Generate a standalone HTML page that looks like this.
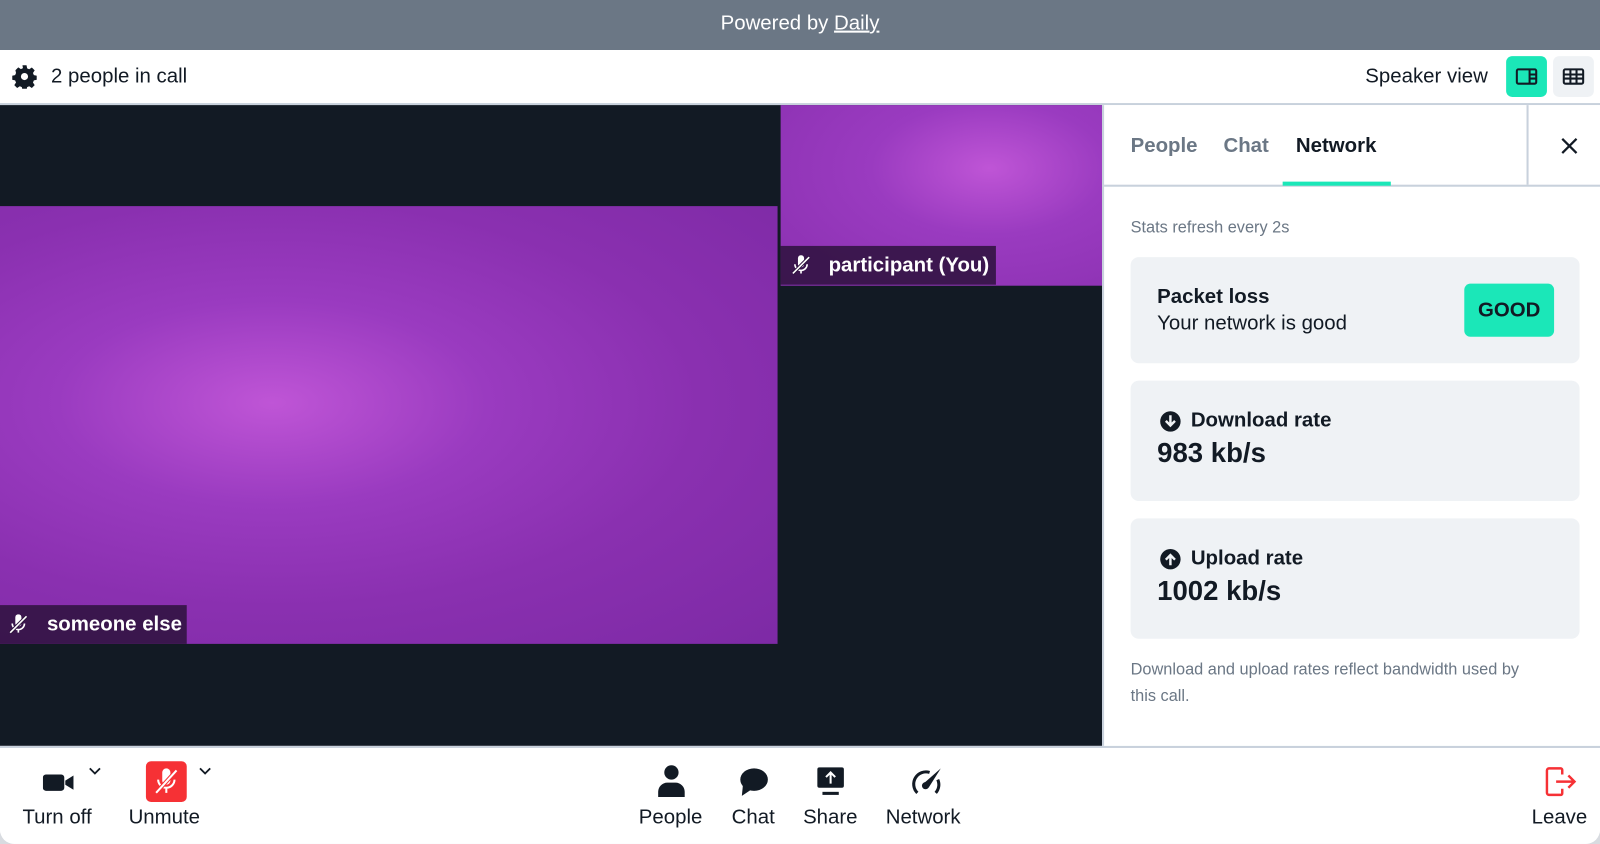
<!DOCTYPE html>
<html><head><meta charset="utf-8"><style>
*{box-sizing:border-box;margin:0;padding:0}
body{width:1600px;height:844px;overflow:hidden;background:#d8dbe0;font-family:"Liberation Sans",sans-serif;color:#121a24;position:relative}
.abs{position:absolute}
#app{position:absolute;left:0;top:0;width:1568px;height:827px;background:#fff;border-radius:0 0 14px 14px;overflow:hidden;transform:scale(1.02041);transform-origin:0 0}
.top{left:0;top:0;width:1568px;height:49px;background:#6b7785;color:#fff;font-size:20px;text-align:center;line-height:47px}
.top u{text-decoration:underline}
.hdr{left:0;top:49px;width:1568px;height:54px;background:#fff;border-bottom:2px solid #c8d1dc}
.vid{left:0;top:103px;width:1080px;height:628px;background:#121a24}
.purple{background:radial-gradient(ellipse at 35% 45%,#bf55d6 0%,#9a3bc0 30%,#8a30b0 60%,#7d2aa5 100%)}
.tag{background:rgba(45,18,60,.85);color:#fff;font-weight:bold;font-size:20px;height:38px;line-height:38px}
.side{left:1080px;top:103px;width:488px;height:628px;background:#fff;border-left:2px solid #c8d1dc}
.card{background:#eff2f5;border-radius:8px;position:absolute;left:1108px;width:440px}
.bot{left:0;top:731px;width:1568px;height:96px;background:#fff;border-top:2px solid #c8d1dc}
.lbl{position:absolute;font-size:20px;color:#121a24;text-align:center}
</style></head><body>
<div id="app">
<div class="abs top">Powered by <u>Daily</u></div>
<div class="abs hdr">
 <svg class="abs" style="left:12px;top:14px" width="24" height="24" viewBox="0 0 24 24"><path fill="#121a24" d="M10 1h4l.6 3 2 .9 2.6-1.7 2.8 2.8-1.7 2.6.9 2 3 .6v4l-3 .6-.9 2 1.7 2.6-2.8 2.8-2.6-1.7-2 .9-.6 3h-4l-.6-3-2-.9-2.6 1.7-2.8-2.8 1.7-2.6-.9-2-3-.6v-4l3-.6.9-2L3.1 5.8 5.9 3l2.6 1.7 2-.9z"/><circle cx="12" cy="12" r="3.5" fill="#fff"/></svg>
 <div class="abs" style="left:50px;top:15px;font-size:20px">2 people in call</div>
 <div class="abs" style="left:1338px;top:15px;font-size:20px">Speaker view</div>
 <div class="abs" style="left:1476px;top:6px;width:40px;height:40px;background:#1be7b8;border-radius:6px"><svg style="margin:9px" width="22" height="22" viewBox="0 0 22 22"><rect x="1.5" y="4" width="19" height="14" rx="1.5" fill="none" stroke="#121a24" stroke-width="2"/><path d="M14 4v14M14 9h6M14 13h6" stroke="#121a24" stroke-width="2"/></svg></div>
 <div class="abs" style="left:1522px;top:6px;width:40px;height:40px;background:#eff2f5;border-radius:6px"><svg style="margin:9px" width="22" height="22" viewBox="0 0 22 22"><rect x="1.5" y="4" width="19" height="14" rx="1.5" fill="none" stroke="#121a24" stroke-width="2"/><path d="M1.5 9h19M1.5 13h19M8 4v14M14 4v14" stroke="#121a24" stroke-width="2"/></svg></div>
</div>
<div class="abs vid">
 <div class="abs purple" style="left:0;top:99px;width:762px;height:429px"></div>
 <div class="abs tag" style="left:0;top:490px;width:183px"><svg class="abs" style="left:8px;top:9px" width="20" height="20" viewBox="0 0 20 20"><path d="M7 3a3 3 0 016 0v6a3 3 0 01-6 0z" fill="#fff"/><path d="M4 9a6 6 0 0012 0M10 15v3" stroke="#fff" stroke-width="1.6" fill="none"/><path d="M2 18L18 2" stroke="#2d123c" stroke-width="3.5"/><path d="M2 18L18 2" stroke="#fff" stroke-width="1.6"/></svg><span style="margin-left:46px">someone else</span></div>
 <div class="abs purple" style="left:765px;top:0;width:315px;height:177px;background:radial-gradient(ellipse at 65% 35%,#bf55d6 0%,#9a3bc0 40%,#8a30b0 100%)"></div>
 <div class="abs tag" style="left:765px;top:138px;width:211px"><svg class="abs" style="left:10px;top:9px" width="20" height="20" viewBox="0 0 20 20"><path d="M7 3a3 3 0 016 0v6a3 3 0 01-6 0z" fill="#fff"/><path d="M4 9a6 6 0 0012 0M10 15v3" stroke="#fff" stroke-width="1.6" fill="none"/><path d="M2 18L18 2" stroke="#2d123c" stroke-width="3.5"/><path d="M2 18L18 2" stroke="#fff" stroke-width="1.6"/></svg><span style="margin-left:47px">participant (You)</span></div>
</div>
<div class="abs side">
 <div class="abs" style="left:0;top:78px;width:488px;height:2px;background:#c8d1dc"></div>
 <div class="abs" style="left:414px;top:0;width:2px;height:78px;background:#c8d1dc"></div>
 <div class="abs" style="left:26px;top:29px;font-size:20px;color:#6b7785;font-weight:bold">People</div>
 <div class="abs" style="left:117px;top:29px;font-size:20px;color:#6b7785;font-weight:bold">Chat</div>
 <div class="abs" style="left:188px;top:29px;font-size:20px;font-weight:bold">Network</div>
 <div class="abs" style="left:175px;top:75px;width:106px;height:4px;background:#1be7b8"></div>
 <svg class="abs" style="left:447px;top:31px" width="18" height="18" viewBox="0 0 18 18"><path d="M2 2l14 14M16 2L2 16" stroke="#121a24" stroke-width="2.2"/></svg>
 <div class="abs" style="left:26px;top:112px;font-size:16px;color:#6b7785">Stats refresh every 2s</div>
 <div class="abs" style="left:26px;top:541px;width:400px;font-size:16px;line-height:26px;color:#6b7785">Download and upload rates reflect bandwidth used by this call.</div>
</div>
<div class="card" style="top:252px;height:104px">
 <div class="abs" style="left:26px;top:28px;font-size:20px;font-weight:bold">Packet loss</div>
 <div class="abs" style="left:26px;top:54px;font-size:20px">Your network is good</div>
 <div class="abs" style="left:327px;top:26px;width:88px;height:52px;background:#1be7b8;border-radius:6px;font-weight:bold;font-size:20px;text-align:center;line-height:52px">GOOD</div>
</div>
<div class="card" style="top:373px;height:118px">
 <svg class="abs" style="left:28px;top:29px" width="22" height="22" viewBox="0 0 22 22"><circle cx="11" cy="11" r="10" fill="#121a24"/><path d="M11 5v10M6.5 10.5L11 15l4.5-4.5" stroke="#eff2f5" stroke-width="2.4" fill="none"/></svg>
 <div class="abs" style="left:59px;top:28px;font-size:20px;font-weight:bold">Download rate</div>
 <div class="abs" style="left:26px;top:56px;font-size:27px;font-weight:bold">983 kb/s</div>
</div>
<div class="card" style="top:508px;height:118px">
 <svg class="abs" style="left:28px;top:29px" width="22" height="22" viewBox="0 0 22 22"><circle cx="11" cy="11" r="10" fill="#121a24"/><path d="M11 17V7M6.5 11.5L11 7l4.5 4.5" stroke="#eff2f5" stroke-width="2.4" fill="none"/></svg>
 <div class="abs" style="left:59px;top:28px;font-size:20px;font-weight:bold">Upload rate</div>
 <div class="abs" style="left:26px;top:56px;font-size:27px;font-weight:bold">1002 kb/s</div>
</div>
<div class="abs bot">
 <svg class="abs" style="left:42px;top:24px" width="32" height="20" viewBox="0 0 32 20"><rect x="0" y="2" width="21" height="16" rx="3" fill="#121a24"/><path d="M22 8l8-5v14l-8-5z" fill="#121a24"/></svg>
 <svg class="abs" style="left:86px;top:18px" width="14" height="10" viewBox="0 0 14 10"><path d="M2 2l5 5 5-5" stroke="#121a24" stroke-width="1.8" fill="none"/></svg>
 <div class="lbl" style="left:22px;top:57px">Turn off</div>
 <div class="abs" style="left:143px;top:13px;width:40px;height:40px;background:#f63135;border-radius:5px"><svg style="margin:6px" width="28" height="28" viewBox="0 0 28 28"><path d="M10 5a4 4 0 018 0v8a4 4 0 01-8 0z" fill="#fff"/><path d="M6 12a8 8 0 0016 0M14 20v5" stroke="#fff" stroke-width="2" fill="none"/><path d="M4 25L24 3" stroke="#f63135" stroke-width="4"/><path d="M4 25L24 3" stroke="#fff" stroke-width="2"/></svg></div>
 <svg class="abs" style="left:194px;top:18px" width="14" height="10" viewBox="0 0 14 10"><path d="M2 2l5 5 5-5" stroke="#121a24" stroke-width="1.8" fill="none"/></svg>
 <div class="lbl" style="left:126px;top:57px">Unmute</div>
 <svg class="abs" style="left:644px;top:16px" width="28" height="32" viewBox="0 0 28 32"><circle cx="14" cy="8" r="7" fill="#121a24"/><path d="M1 32v-5a9 9 0 019-9h8a9 9 0 019 9v5z" fill="#121a24"/></svg>
 <div class="lbl" style="left:626px;top:57px">People</div>
 <svg class="abs" style="left:724px;top:18px" width="30" height="30" viewBox="0 0 30 30"><ellipse cx="15" cy="13" rx="13.5" ry="11" fill="#121a24"/><path d="M4 19L3 29l9-6z" fill="#121a24"/></svg>
 <div class="lbl" style="left:717px;top:57px">Chat</div>
 <svg class="abs" style="left:800px;top:18px" width="28" height="30" viewBox="0 0 28 30"><rect x="1" y="1" width="26" height="20" rx="2" fill="#121a24"/><path d="M14 17V6M9.5 10.5L14 6l4.5 4.5" stroke="#fff" stroke-width="2" fill="none"/><rect x="6" y="25" width="16" height="3" fill="#121a24"/></svg>
 <div class="lbl" style="left:787px;top:57px">Share</div>
 <svg class="abs" style="left:891px;top:18px" width="34" height="30" viewBox="0 0 34 30"><path d="M8 26A12 12 0 0 1 20 6" stroke="#121a24" stroke-width="3" fill="none"/><path d="M28 13a12 12 0 0 1-2 13" stroke="#121a24" stroke-width="3" fill="none"/><path d="M31 2L19 21l-5-4z" fill="#121a24"/><circle cx="16" cy="19" r="3.5" fill="#121a24"/></svg>
 <div class="lbl" style="left:868px;top:57px">Network</div>
 <svg class="abs" style="left:1514px;top:18px" width="32" height="30" viewBox="0 0 32 30"><path d="M17 8V3.5A1.5 1.5 0 0 0 15.5 2H4A2 2 0 0 0 2 4v22a2 2 0 0 0 2 2h11.5a1.5 1.5 0 0 0 1.5-1.5V22" stroke="#f63135" stroke-width="2.4" fill="none"/><path d="M11 15h18M23 9l6 6-6 6" stroke="#f63135" stroke-width="2.4" fill="none"/></svg>
 <div class="lbl" style="left:1501px;top:57px">Leave</div>
</div>
</div>
</body></html>
